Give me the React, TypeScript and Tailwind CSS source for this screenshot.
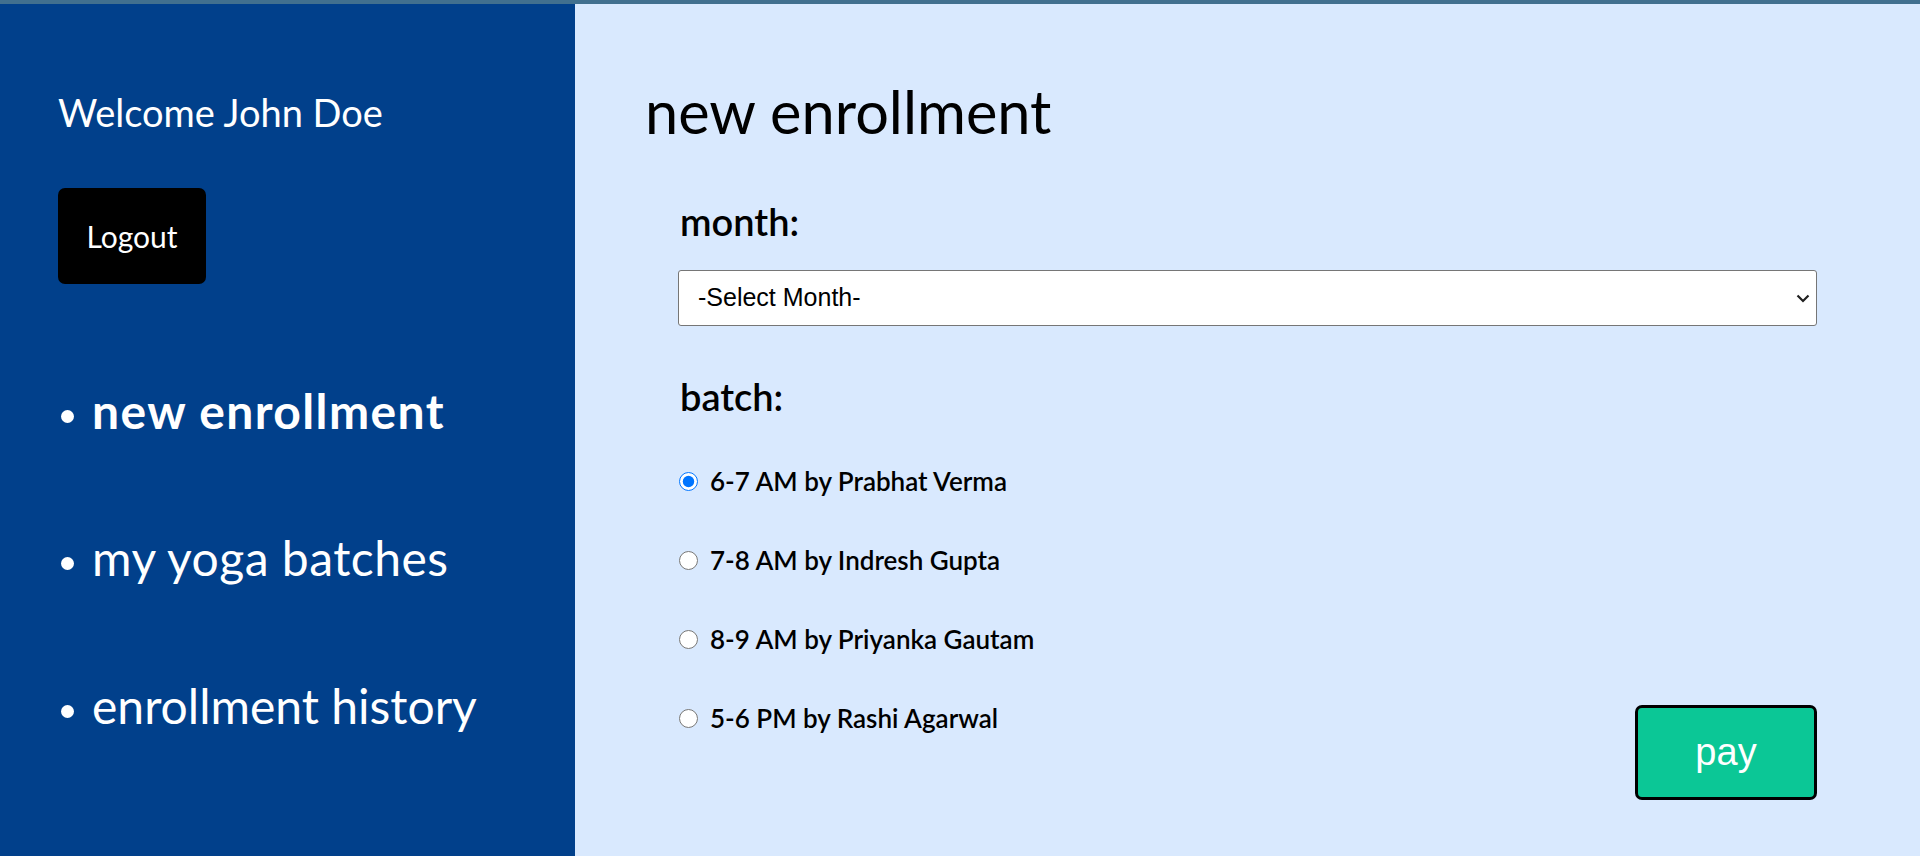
import React from "react";

const batches = [
  "6-7 AM by Prabhat Verma",
  "7-8 AM by Indresh Gupta",
  "8-9 AM by Priyanka Gautam",
  "5-6 PM by Rashi Agarwal",
];

const navItems = [
  { label: "new enrollment", active: true, spacing: "tracking-[1.4px]" },
  { label: "my yoga batches", active: false, spacing: "tracking-[0.5px]" },
  { label: "enrollment history", active: false, spacing: "tracking-normal" },
];

const Sidebar = () => (
  <aside className="w-[575px] shrink-0 bg-[#01408b] text-white pt-[86px] pl-[58px]">
    <p className="text-[38px] leading-[1.2]">Welcome John Doe</p>

    <button className="mt-[52px] w-[148px] h-[96px] rounded-[7px] bg-black text-white text-[30px] leading-[1.2] flex items-center justify-center">
      Logout
    </button>

    <ul className="mt-[98px] flex flex-col gap-[90px]">
      {navItems.map((item) => (
        <li key={item.label} className="flex items-start text-[48px] leading-[1.2]">
          <span className="mt-[28px] ml-[3px] w-[13px] h-[13px] rounded-full bg-white shrink-0"></span>
          <span className={`ml-[18px] ${item.spacing} ${item.active ? "font-bold" : "font-normal"}`}>
            {item.label}
          </span>
        </li>
      ))}
    </ul>
  </aside>
);

const EnrollmentForm = () => (
  <main className="flex-1 bg-[#d9e9fe] text-black pt-[72px] pl-[70px] pr-[103px]">
    <h1 className="text-[59.5px] leading-[1.2] font-normal">new enrollment</h1>

    <form className="ml-[33px]" onSubmit={(e) => e.preventDefault()}>
      <label className="block mt-[52px] ml-[2px] text-[38px] leading-[1.2] font-semibold">month:</label>

      <div className="relative mt-[25px]">
        <select
          defaultValue=""
          className="appearance-none w-full h-[56px] bg-white border border-[#767676] rounded-[3px] pl-[19px] text-[25px] font-['Liberation_Sans',Arial,sans-serif] text-black"
        >
          <option value="">-Select Month-</option>
          <option value="jan">January</option>
          <option value="feb">February</option>
          <option value="mar">March</option>
        </select>
        {/* chevron */}
        <svg
          className="absolute right-[7px] top-[24px] pointer-events-none"
          width="14"
          height="9"
          viewBox="0 0 14 9"
          fill="none"
        >
          <path d="M1.5 1.5 L7 7 L12.5 1.5" stroke="#202020" strokeWidth="2.2" />
        </svg>
      </div>

      <label className="block mt-[48px] ml-[2px] text-[38px] leading-[1.2] font-semibold">batch:</label>

      <div className="flex justify-between items-end">
        <div className="mt-[42px] pb-[61px] flex flex-col gap-[39px]">
          {batches.map((b, idx) => (
            <label key={b} className="h-[40px] flex items-center gap-[12px] ml-[1px] text-[26px] font-semibold">
              <input
                type="radio"
                name="batch"
                defaultChecked={idx === 0}
                className="m-0 w-[19px] h-[19px] accent-[#0075ff]"
              />
              <span>{b}</span>
            </label>
          ))}
        </div>

        <button
          type="submit"
          className="w-[182px] h-[95px] border-[3px] border-black rounded-[7px] bg-[#0bc796] text-white text-[38px] font-['Liberation_Sans',Arial,sans-serif] flex items-center justify-center"
        >
          pay
        </button>
      </div>
    </form>
  </main>
);

export default function App() {
  return (
    <div className="h-[856px] flex flex-col font-['Lato',sans-serif] overflow-hidden">
      <div className="h-[4px] bg-[#41708f] shrink-0"></div>
      <div className="flex flex-1">
        <Sidebar />
        <EnrollmentForm />
      </div>
    </div>
  );
}
